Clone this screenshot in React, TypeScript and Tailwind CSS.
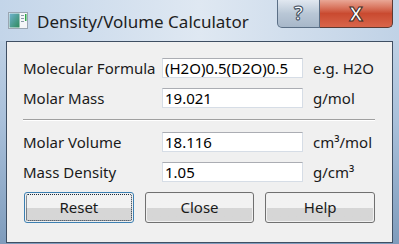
import React from "react"

const rows = [
  { label: "Molecular Formula", value: "(H2O)0.5(D2O)0.5", unit: "e.g. H2O" },
  { label: "Molar Mass", value: "19.021", unit: "g/mol" },
]

const rows2 = [
  { label: "Molar Volume", value: "18.116", unit: "cm³/mol" },
  { label: "Mass Density", value: "1.05", unit: "g/cm³" },
]

function AppIcon() {
  return (
    <svg width="20" height="17" viewBox="0 0 20 17">
      <rect x="0.5" y="0.5" width="19" height="16" fill="#f4f6f8" stroke="#9aa6b2" />
      <defs>
        <linearGradient id="ig" x1="0" y1="0" x2="1" y2="1">
          <stop offset="0" stopColor="#6fb3d0" />
          <stop offset="1" stopColor="#2f8a5a" />
        </linearGradient>
      </defs>
      <rect x="1.5" y="1.5" width="10" height="14" fill="url(#ig)" />
      <rect x="13" y="3" width="3" height="1" fill="#8a9aa8" />
      <rect x="13" y="6" width="3" height="1" fill="#8a9aa8" />
      <rect x="13" y="9" width="3" height="1" fill="#8a9aa8" />
      <rect x="17" y="2" width="1.5" height="7" fill="#2fa84a" />
    </svg>
  )
}

function Field({ label, value, unit }: { label: string; value: string; unit: string }) {
  return (
    <>
      <span className="text-[15px] leading-5 text-[#1a1a1a]">{label}</span>
      <div className="h-5 bg-white border border-[#d6dde6] border-t-[#abadb3] px-[2px] text-[15px] leading-[18px] text-black overflow-hidden whitespace-nowrap">
        {value}
      </div>
      <span className="text-[15px] leading-5 text-[#1a1a1a] pl-[10px]">{unit}</span>
    </>
  )
}

function Btn({ children, focused }: { children: React.ReactNode; focused?: boolean }) {
  return (
    <div
      className={
        "w-[110px] h-[31px] rounded-[3px] border p-[1px] " +
        (focused ? "border-[#3c7fb1]" : "border-[#707070]")
      }
    >
      <div
        className={
          "h-full rounded-[2px] flex items-center justify-center text-[15px] text-[#1a1a1a] bg-gradient-to-b from-[#f2f2f2] from-50% to-[#d6d6d6] to-50% " +
          (focused ? "outline outline-1 outline-dotted outline-[#1a2a3a] -outline-offset-[1px]" : "")
        }
      >
        {children}
      </div>
    </div>
  )
}

export default function App() {
  return (
    <div
      className="w-[399px] h-[244px] flex flex-col bg-gradient-to-b from-[#c9d9ea] via-[#a9c0da] to-[#7f9cbc]"
      style={{ fontFamily: '"Segoe UI", "Noto Sans", "Open Sans", sans-serif' }}
    >
      <div className="h-[41px] flex items-start shrink-0 bg-gradient-to-r from-[#c3d5e9] via-[#dfe8f2] to-[#c0d2e6]">
        <div className="pl-[8px] pt-[12px]">
          <AppIcon />
        </div>
        <span className="pl-[9px] pt-[9px] text-[17px] text-[#1e1e1e]">Density/Volume Calculator</span>
        <div className="ml-auto mr-[6px] flex">
          <div className="w-[43px] h-[28px] rounded-bl-[5px] border border-t-0 border-[#5b6f86] bg-gradient-to-b from-[#e1e8f0] via-[#b9c7d6] to-[#a7b7c9] flex items-center justify-center">
            <span className="text-[19px] font-bold text-white leading-none" style={{ WebkitTextStroke: "1px #3b4a5a" }}>?</span>
          </div>
          <div className="w-[73px] h-[28px] rounded-br-[5px] border border-t-0 border-l-0 border-[#5b3a33] bg-gradient-to-b from-[#e9a796] via-[#c94a30] to-[#d9654a] flex items-center justify-center">
            <span className="text-[20px] font-bold text-white leading-none" style={{ WebkitTextStroke: "1px #3b2a26" }}>X</span>
          </div>
        </div>
      </div>
      <div className="flex-1 mx-[6px] mb-[1px] border border-[#3f4f63] bg-[#f0f0f0] pl-[16px] pr-[17px] pt-[16px]">
        <div className="grid grid-cols-[139px_141px_auto] gap-y-[10px] items-center">
          {rows.map((r) => (
            <Field key={r.label} {...r} />
          ))}
        </div>
        <div className="my-[11px] border-t border-[#a0a0a0] border-b border-b-white" />
        <div className="grid grid-cols-[139px_141px_auto] gap-y-[10px] items-center">
          {rows2.map((r) => (
            <Field key={r.label} {...r} />
          ))}
        </div>
        <div className="mt-[10px] pl-[1px] flex gap-[11px]">
          <Btn focused>Reset</Btn>
          <Btn>Close</Btn>
          <Btn>Help</Btn>
        </div>
      </div>
    </div>
  )
}
